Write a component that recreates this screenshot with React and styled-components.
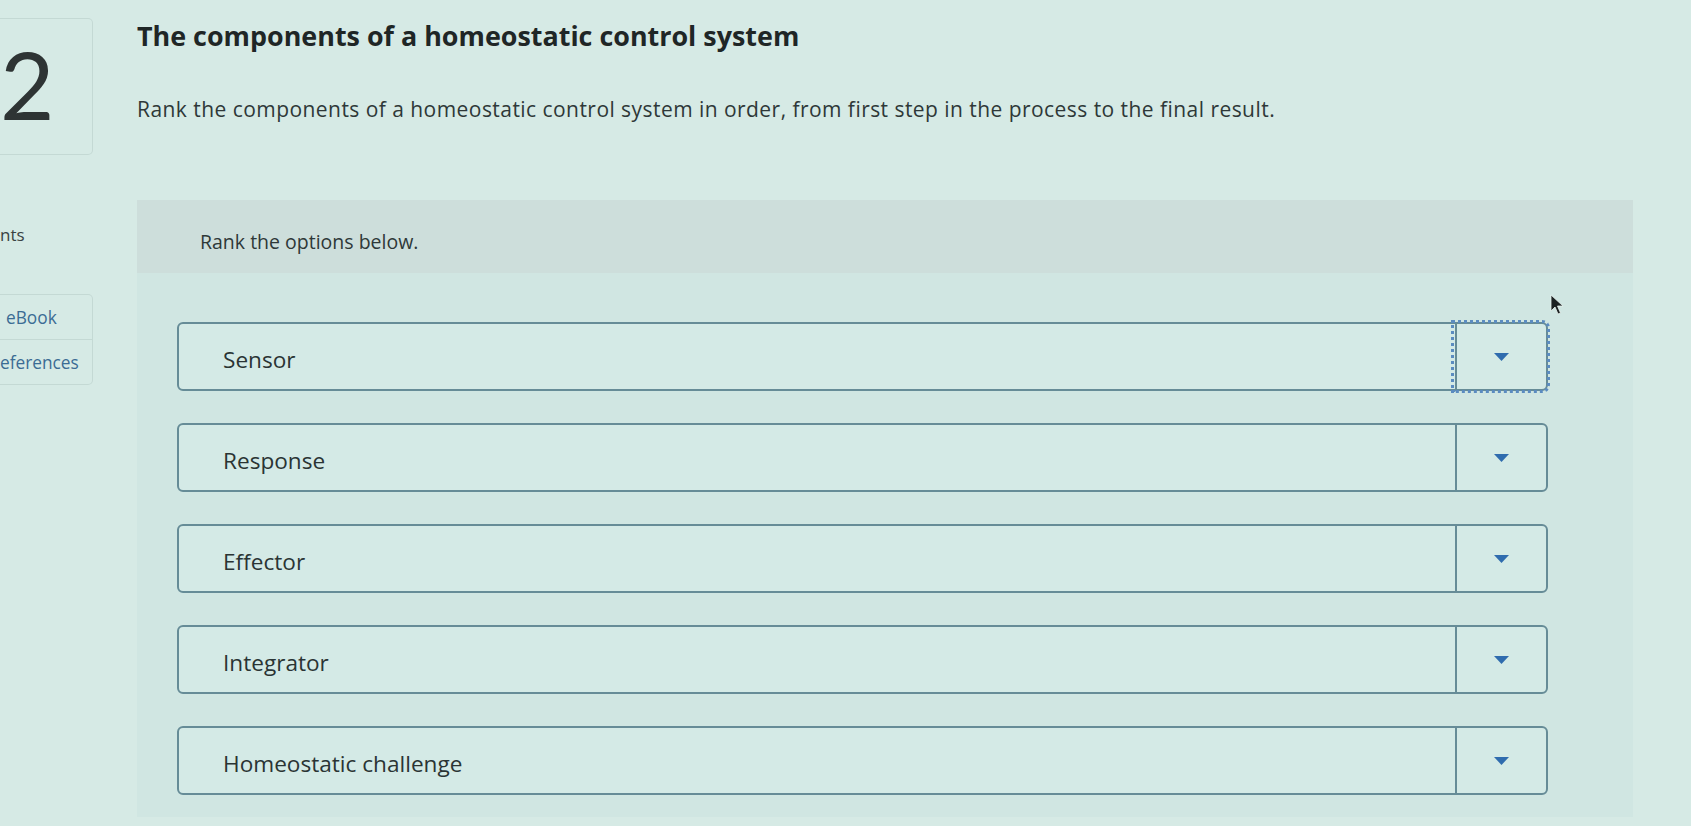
import React from "react";
import styled, { createGlobalStyle } from "styled-components";

const Global = createGlobalStyle`
  html, body { margin: 0; padding: 0; }
  body {
    background: #d6eae5;
    font-family: "Open Sans", Lato, "Liberation Sans", sans-serif;
    color: #2c3636;
    overflow: hidden;
  }
`;

const Page = styled.div`
  display: flex;
  width: 1691px;
  height: 826px;
  overflow: hidden;
  position: relative;
`;

const Sidebar = styled.aside`
  width: 93px;
  flex: none;
  display: flex;
  flex-direction: column;
  padding-top: 18px;
`;

const NumberBox = styled.div`
  height: 137px;
  border: 1px solid #c4d9d4;
  border-left: none;
  border-radius: 0 5px 5px 0;
  display: flex;
  align-items: center;
  padding-left: 0;
  box-sizing: border-box;
`;

const BigNumber = styled.span`
  font-family: Lato, "Open Sans", sans-serif;
  font-size: 94px;
  font-weight: 400;
  line-height: 1;
  color: #2e3434;
  margin-top: -6px;
`;

const Points = styled.div`
  margin-top: 70px;
  font-size: 17px;
  color: #3a4242;
  line-height: 20px;
`;

const LinksBox = styled.div`
  margin-top: 49px;
  border: 1px solid #c4d9d4;
  border-left: none;
  border-radius: 0 5px 5px 0;
  display: flex;
  flex-direction: column;
`;

const LinkItem = styled.div`
  height: 44px;
  display: flex;
  align-items: center;
  padding-left: ${(p) => p.$indent}px;
  font-size: 17.3px;
  color: #3b6c94;
  border-top: ${(p) => (p.$first ? "none" : "1px solid #c4d9d4")};
`;

const Main = styled.main`
  margin-left: 44px;
  display: flex;
  flex-direction: column;
  width: 1496px;
  flex: none;
`;

const Title = styled.h1`
  margin: 19px 0 0;
  font-size: 26.9px;
  font-weight: 700;
  line-height: 34px;
  color: #1f2626;
`;

const Prompt = styled.p`
  margin: 43px 0 0;
  font-size: 21px;
  letter-spacing: 0.45px;
  line-height: 26px;
  color: #2e3838;
`;

const Panel = styled.section`
  margin-top: 78px;
  background: #d0e6e2;
  height: 617px;
  display: flex;
  flex-direction: column;
`;

const PanelHeader = styled.div`
  height: 73px;
  background: #cddedb;
  box-sizing: border-box;
  padding: 31px 0 0 63px;
  font-size: 19.5px;
  line-height: 22px;
  color: #2e3838;
`;

const RankList = styled.div`
  padding: 49px 85px 22px 40px;
  display: flex;
  flex-direction: column;
  gap: 32px;
`;

const Row = styled.div`
  height: 69px;
  box-sizing: border-box;
  border: 2px solid #668c97;
  border-radius: 6px;
  background: #d4eae6;
  display: flex;
  align-items: stretch;
`;

const Label = styled.div`
  flex: 1;
  display: flex;
  align-items: center;
  padding: 6px 0 0 44px;
  font-size: 22.6px;
  color: #2a3434;
`;

const DropButton = styled.div`
  width: 89px;
  flex: none;
  border-left: 2px solid #668c97;
  display: flex;
  align-items: center;
  justify-content: center;
  position: relative;
  outline: ${(p) => (p.$focused ? "3px dotted #5b8cc0" : "none")};
  outline-offset: 1px;
  border-radius: 0 4px 4px 0;
`;

const Caret = styled.svg`
  width: 15px;
  height: 8px;
  display: block;
`;

const Cursor = styled.svg`
  position: absolute;
  left: 1550px;
  top: 294px;
  width: 14px;
  height: 22px;
`;

const items = ["Sensor", "Response", "Effector", "Integrator", "Homeostatic challenge"];

export default function App() {
  return (
    <>
      <Global />
      <Page>
        <Sidebar>
          <NumberBox>
            <BigNumber>2</BigNumber>
          </NumberBox>
          <Points>nts</Points>
          <LinksBox>
            <LinkItem $first $indent={6}>eBook</LinkItem>
            <LinkItem $indent={0}>eferences</LinkItem>
          </LinksBox>
        </Sidebar>
        <Main>
          <Title>The components of a homeostatic control system</Title>
          <Prompt>
            Rank the components of a homeostatic control system in order, from first step in the process to the final result.
          </Prompt>
          <Panel>
            <PanelHeader>Rank the options below.</PanelHeader>
            <RankList>
              {items.map((it, i) => (
                <Row key={it}>
                  <Label>{it}</Label>
                  <DropButton $focused={i === 0}>
                    <Caret viewBox="0 0 15 8">
                      <path d="M0 0 H15 L7.5 8 Z" fill="#2f6cae" />
                    </Caret>
                  </DropButton>
                </Row>
              ))}
            </RankList>
          </Panel>
        </Main>
        <Cursor viewBox="0 0 14 22">
          <path d="M1 1 L1 17 L5 13 L8 20 L10.5 19 L7.5 12 L13 12 Z" fill="#1c2222" stroke="#e8f2ef" strokeWidth="0.8" />
        </Cursor>
      </Page>
    </>
  );
}
